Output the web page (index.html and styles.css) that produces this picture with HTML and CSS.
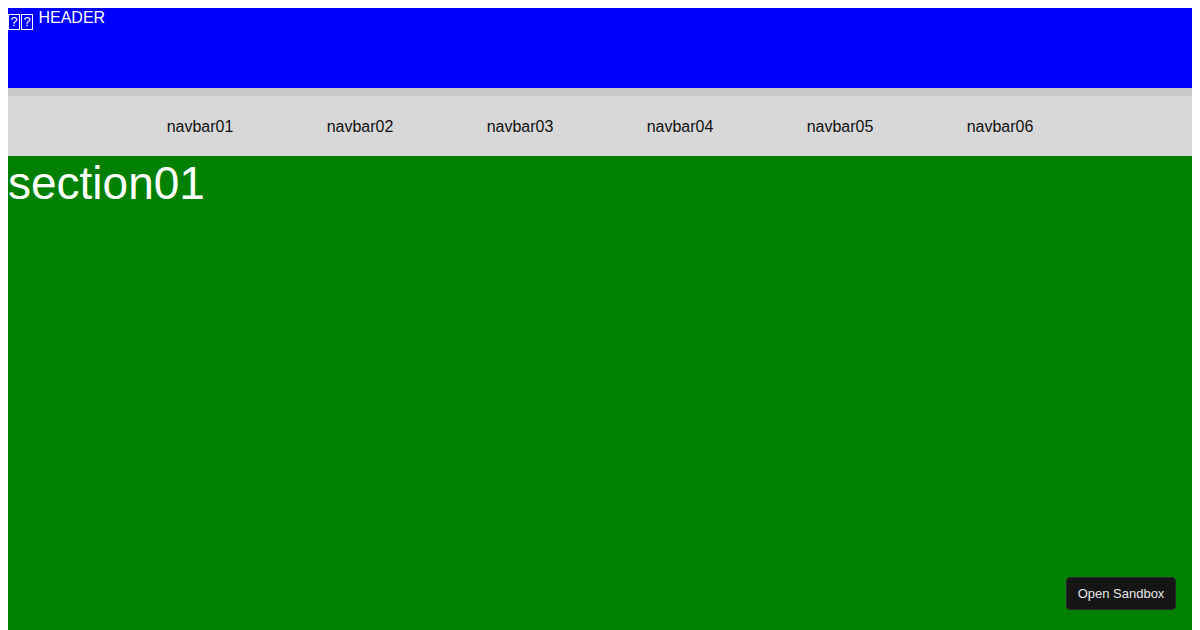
FILE: index.html
```html
<!DOCTYPE html>
<html>
<head>
<meta charset="utf-8">
<link rel="stylesheet" href="styles.css">
</head>
<body>
<header class="header"><span class="tofu">?</span><span class="tofu">?</span> HEADER</header>
<nav class="nav">
  <ul class="nav-list">
    <li class="nav-item">navbar01</li>
    <li class="nav-item">navbar02</li>
    <li class="nav-item">navbar03</li>
    <li class="nav-item">navbar04</li>
    <li class="nav-item">navbar05</li>
    <li class="nav-item">navbar06</li>
  </ul>
</nav>
<section class="section">section01</section>
<button class="sandbox-btn">Open Sandbox</button>
</body>
</html>
```

FILE: styles.css
```css
body {
  margin: 8px;
  font-family: "Liberation Sans", Arial, sans-serif;
  font-size: 16px;
}
.header {
  height: 80px;
  background: #0000ff;
  color: #ffffff;
  line-height: 19px;
}
.tofu {
  display: inline-block;
  width: 10px;
  height: 14px;
  border: 1px solid #ffffff;
  font-size: 13px;
  line-height: 14px;
  text-align: center;
  vertical-align: -3px;
  margin-right: 1px;
}
.nav {
  border-top: 8px solid #c8c8c8;
  background: #d8d8d8;
  height: 60px;
}
.nav-list {
  list-style: none;
  margin: 0 auto;
  padding: 1px 0 0;
  width: 960px;
  display: flex;
}
.nav-item {
  width: 160px;
  text-align: center;
  line-height: 59px;
  color: #111111;
}
.section {
  background: #008000;
  color: #ffffff;
  font-size: 46px;
  height: 600px;
}
.sandbox-btn {
  position: fixed;
  right: 24px;
  bottom: 20px;
  width: 110px;
  height: 33px;
  background: #151515;
  color: #e8e8e8;
  border: 1px solid #2a2a2a;
  border-radius: 4px;
  font-family: "Liberation Sans", Arial, sans-serif;
  font-size: 13px;
  padding: 0;
}
```
